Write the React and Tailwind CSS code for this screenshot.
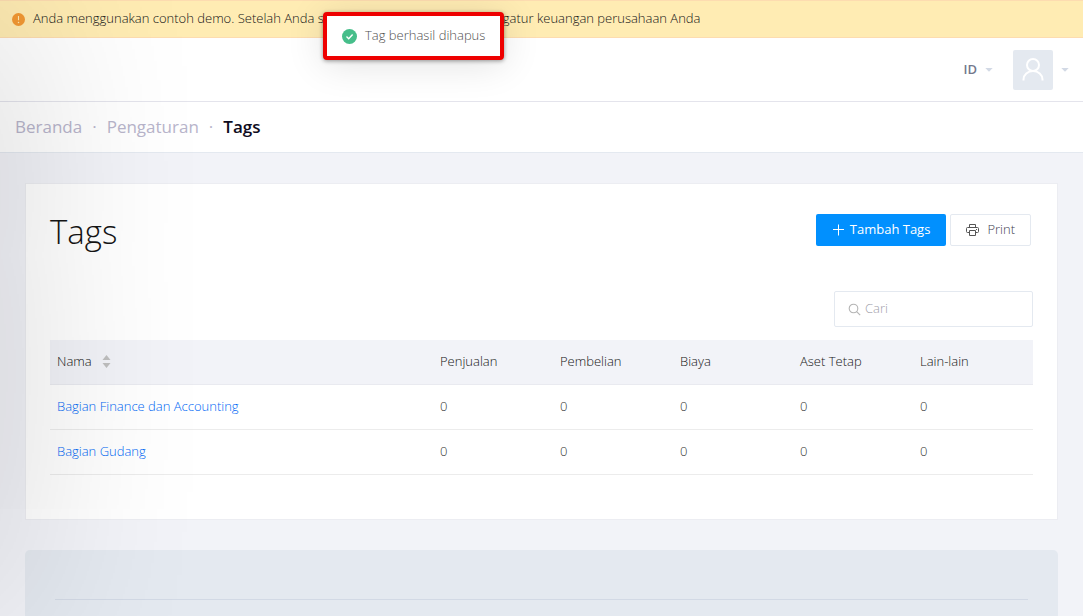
const columns = ["Penjualan", "Pembelian", "Biaya", "Aset Tetap", "Lain-lain"];
const rows = ["Bagian Finance dan Accounting", "Bagian Gudang"];

function Caret() {
  return (
    <svg width="8" height="4" viewBox="0 0 8 4" className="fill-[#d2d9e5]" aria-hidden="true">
      <path d="M0.3 0h7.4L4 3.7z" />
    </svg>
  );
}

function Banner() {
  return (
    <div className="flex h-[38px] items-center gap-2 overflow-hidden border-t border-b border-[#fddcb0] bg-[#ffecb3] px-3">
      <svg width="13" height="13" viewBox="0 0 14 14" className="shrink-0" aria-hidden="true">
        <circle cx="7" cy="7" r="7" fill="#f39834" />
        <path d="M7 3.2v4.600" stroke="#ffecb3" strokeWidth="1.2" />
        <circle cx="7" cy="10.2" r="0.8" fill="#ffecb3" />
      </svg>
      <p className="pb-0.5 whitespace-nowrap text-[#151515]">
        Anda menggunakan contoh demo. Setelah Anda siap, Anda kini dapat mulai mengatur keuangan perusahaan Anda
      </p>
    </div>
  );
}

function Toast() {
  return (
    <div
      role="status"
      className="absolute top-3 left-[323px] flex h-12 items-center gap-2 rounded-sm border-4 border-[#ee0000] bg-white px-[15px] text-[#505050] shadow-[0_1px_4px_rgba(0,0,0,0.4),0_4px_38px_rgba(0,0,0,0.12)]"
    >
      <svg width="15" height="15" viewBox="0 0 15 15" aria-hidden="true">
        <circle cx="7.500" cy="7.500" r="7.500" fill="#46be8a" />
        <path d="M4.500 7.600l2.200 2.200 3.900-4.300" fill="none" stroke="#fff" strokeWidth="1.4" />
      </svg>
      <span className="pb-0.5">Tag berhasil dihapus</span>
    </div>
  );
}

export default function App() {
  return (
    <div className="relative flex min-h-screen flex-col overflow-hidden bg-[#f2f3f8] font-['Open_Sans',sans-serif] text-[13px] leading-5 font-light text-[#151515]">
      <Banner />
      <header className="flex h-16 items-center justify-end border-b border-[#e4e4ec] bg-white pr-[14px]">
        <button type="button" className="flex items-center gap-2 font-semibold text-[#74788d]">
          <span className="pb-0.5">ID</span>
          <Caret />
        </button>
        <button type="button" aria-label="Akun" className="ml-5 flex items-center gap-2">
          <span className="flex size-10 items-center justify-center rounded-xs bg-[#e4e9f0]">
            <svg width="22" height="24" viewBox="0 0 22 24" fill="none" stroke="#fff" strokeWidth="2" aria-hidden="true">
              <circle cx="11" cy="7" r="6" />
              <path d="M1.500 22.500v-1a9.500 8.500 0 0 1 19 0v1" />
            </svg>
          </span>
          <Caret />
        </button>
      </header>

      <nav aria-label="Breadcrumb" className="flex h-[51px] items-center gap-2.5 border-b border-[#e4e9f0] bg-white px-[15px] text-[17px] font-normal text-[#b8b5cb]">
        <a href="#beranda">Beranda</a>
        <span>·</span>
        <a href="#pengaturan">Pengaturan</a>
        <span>·</span>
        <span className="font-semibold text-[#0e0b20]">Tags</span>
      </nav>

      <main className="flex flex-1 flex-col px-[25px] pt-[30px]">
        <section className="border border-[#ecedf2] bg-white px-6 pt-[30px] pb-11">
          <div className="flex items-start justify-between">
            <h1 className="text-[33px] leading-9 text-[#151515]">Tags</h1>
            <div className="flex gap-1 pr-0.5">
              <button type="button" className="flex h-8 items-center gap-1.5 rounded-xs bg-[#0190fe] pr-4 pl-[15px] font-normal text-white">
                <svg width="13" height="13" viewBox="0 0 13 13" stroke="#fff" aria-hidden="true">
                  <path d="M7.500 0.500v11M2 5.500h11" />
                </svg>
                <span className="pb-0.5">Tambah Tags</span>
              </button>
              <button type="button" className="flex h-8 items-center gap-2 rounded-xs border border-[#e4e9f0] bg-white px-[15px] text-[#3f4150]">
                <svg width="13" height="13" viewBox="0 0 13 13" fill="none" stroke="#555" aria-hidden="true">
                  <path d="M3.500 3.500v-3h6v3M3.500 8.500h-2a1 1 0 0 1-1-1v-3a1 1 0 0 1 1-1h10a1 1 0 0 1 1 1v3a1 1 0 0 1-1 1h-2M3.500 6.500h6v5h-6zM10 5.500h1" />
                </svg>
                <span className="pb-0.5">Print</span>
              </button>
            </div>
          </div>

          <div className="mt-[41px] flex justify-end">
            <label className="flex h-9 w-[199px] items-center gap-1 rounded-xs border border-[#e4e9f0] px-[13px]">
              <svg width="13" height="13" viewBox="0 0 13 13" fill="none" stroke="#b4b4b4" strokeWidth="1.1" aria-hidden="true">
                <circle cx="5.500" cy="5.500" r="4.300" />
                <path d="M8.600 8.600l3.600 3.600" />
              </svg>
              <input type="text" aria-label="Cari" placeholder="Cari" className="min-w-0 flex-1 pb-0.5 outline-none placeholder:text-[#a0a0aa]" />
            </label>
          </div>

          <table className="mt-[13px] w-full table-fixed text-left">
            <thead>
              <tr className="h-11 border-b border-[#e9eaf0] bg-[#f2f3f8]">
                <th className="px-[7px] pb-0.5 font-light">
                  <button type="button" className="flex items-center gap-2.5">
                    Nama
                    <svg width="9" height="13" viewBox="0 0 9 13" fill="#bfbfbf" className="mt-0.5" aria-hidden="true">
                      <path d="M4.500 0L8.500 5h-8zM4.500 13l-4-5h8z" />
                    </svg>
                  </button>
                </th>
                {columns.map((name) => (
                  <th key={name} className="w-[120px] px-[7px] pb-0.5 font-light">{name}</th>
                ))}
              </tr>
            </thead>
            <tbody>
              {rows.map((row) => (
                <tr key={row} className="h-[45px] border-b border-[#ececec]">
                  <td className="px-[7px] pb-0.5 text-[#0068f5]"><a href="#tag">{row}</a></td>
                  {columns.map((name) => (
                    <td key={name} className="px-[7px] pb-0.5 text-[#333]">0</td>
                  ))}
                </tr>
              ))}
            </tbody>
          </table>
        </section>

        <footer className="mt-[30px] flex-1 rounded-t-[5px] bg-[#e4e9f0] px-[30px] pt-[49px]">
          <div className="h-4 border-t border-[#d2d9e5]" />
        </footer>
      </main>

      <Toast />
      <div className="pointer-events-none absolute inset-y-0 -left-64 w-64 shadow-[0_0_200px_rgba(0,0,0,0.2)]" />
    </div>
  );
}
